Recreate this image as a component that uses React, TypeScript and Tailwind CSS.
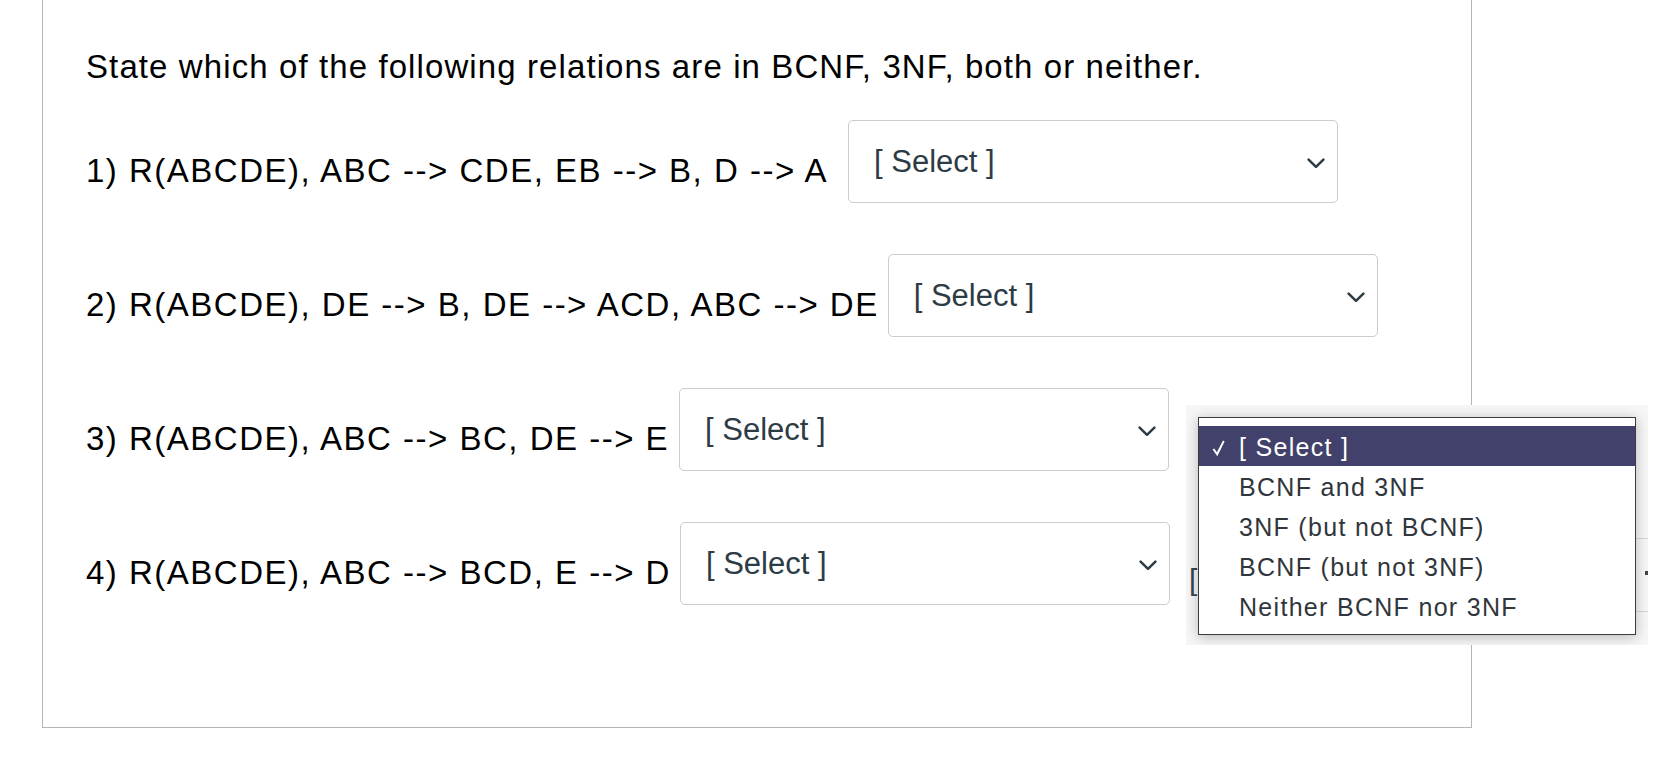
import React from "react";

const rows = [
  { label: "1) R(ABCDE), ABC --> CDE, EB --> B, D --> A", ml: "ml-[20px]" },
  { label: "2) R(ABCDE), DE --> B, DE --> ACD, ABC --> DE", ml: "ml-[9px]" },
  { label: "3) R(ABCDE), ABC --> BC, DE --> E", ml: "ml-[10px]" },
  { label: "4) R(ABCDE), ABC --> BCD, E --> D", ml: "ml-[9px]" },
];

const options = ["BCNF and 3NF", "3NF (but not BCNF)", "BCNF (but not 3NF)", "Neither BCNF nor 3NF"];

function Chevron() {
  return (
    <svg width="18" height="11" viewBox="0 0 18 11" className="ml-auto mt-[37px] shrink-0">
      <polyline points="1.6,1.6 9,8.8 16.4,1.6" fill="none" stroke="#2d3b45" strokeWidth="2.5" strokeLinecap="round" strokeLinejoin="round" />
    </svg>
  );
}

function SelectBox({ ml }: { ml: string }) {
  return (
    <div className={`${ml} flex items-start w-[490px] h-[83px] shrink-0 border border-[#c7cdd1] rounded-[5px] bg-white pl-[25px] pr-[12px] box-border`}>
      <span className="pt-[23px] text-[31px] leading-[36px] text-[#2d3b45] whitespace-nowrap">[ Select ]</span>
      <Chevron />
    </div>
  );
}

function Check() {
  return (
    <svg width="13" height="17" viewBox="0 0 13 17" className="mt-[12px] ml-[1px] shrink-0">
      <path d="M0.6 9.6 L2.2 8.4 L4.9 12.3 L11 0.6 L12.6 1.4 L5.3 16.2 Z" fill="#ffffff" />
    </svg>
  );
}

export default function App() {
  return (
    <div className="relative w-[1668px] h-[760px] overflow-hidden bg-white font-['Liberation_Sans',Arial,sans-serif]">
      <div className="ml-[42px] w-[1430px] h-[728px] border-x border-b border-[#b5b5b5] box-border pl-[43px] pt-[47px]">
        <div className="text-[33px] leading-[40px] tracking-[1.1px] text-black whitespace-nowrap">
          State which of the following relations are in BCNF, 3NF, both or neither.
        </div>
        <div className="mt-[33px] flex flex-col gap-[51px]">
          {rows.map((r, i) => (
            <div key={i} className="flex items-start">
              <span className="pt-[31px] text-[33px] leading-[40px] tracking-[1.5px] text-black whitespace-nowrap">{r.label}</span>
              <SelectBox ml={r.ml} />
            </div>
          ))}
        </div>
      </div>

      {/* open dropdown menu overlay */}
      <div className="absolute left-[1186px] top-[405px] w-[462px] h-[240px] overflow-hidden bg-[#f6f6f6]">
        <div className="absolute left-[440px] right-0 top-[133px] h-[74px] border-y border-[#d6d6d6]" />
        <span className="absolute left-[3px] top-[157px] text-[30px] leading-[36px] text-[#3a4550]">[</span>
        <div className="absolute left-[459px] top-[166px] w-[3px] h-[4px] bg-[#444]" />
        <div className="absolute left-[12px] top-[12px] w-[438px] h-[218px] box-border border border-[#3c3c3c] bg-white shadow-[0_2px_12px_rgba(0,0,0,0.25)] pt-[8px]">
          <div className="flex items-start h-[40px] bg-[#41416b] text-white pl-[12px] pt-[2px] box-border">
            <span className="w-[28px] shrink-0 flex">
              <Check />
            </span>
            <span className="text-[25px] leading-[38px] tracking-[1.3px] whitespace-nowrap">[ Select ]</span>
          </div>
          {options.map((o) => (
            <div key={o} className="h-[40px] pl-[40px] pt-[2px] box-border text-[25px] leading-[38px] tracking-[1.3px] text-[#30363c] whitespace-nowrap">
              {o}
            </div>
          ))}
        </div>
      </div>
    </div>
  );
}
